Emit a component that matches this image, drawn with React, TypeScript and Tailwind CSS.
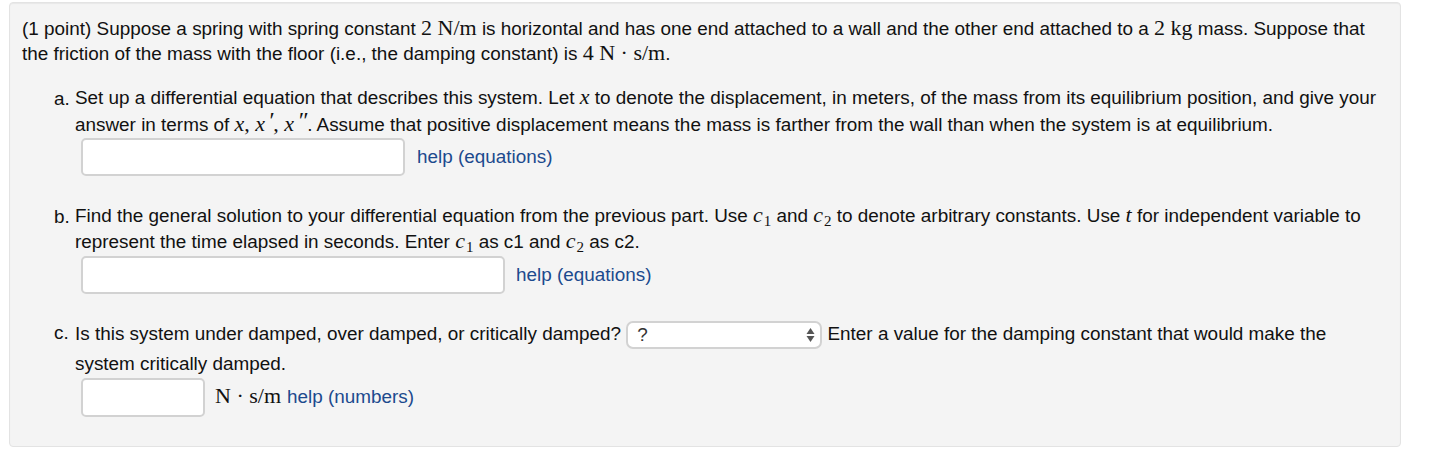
import React from "react";

const serif = "font-['Liberation_Serif','DejaVu_Serif',serif] text-[22px] leading-none";

function M({ children }: { children: React.ReactNode }) {
  return <span className={serif}>{children}</span>;
}

function V({ children }: { children: React.ReactNode }) {
  return <span className={`${serif} italic`}>{children}</span>;
}

function Prime({ mark }: { mark: string }) {
  return <span className={`${serif} italic text-[24px] relative -top-[3px] ml-[3px]`}>{mark}</span>;
}

function C({ n }: { n: string }) {
  return (
    <span className={serif}>
      <span className="italic">c</span>
      <span className="text-[15px] relative top-[4px] ml-[1px]">{n}</span>
    </span>
  );
}

function Help({ label }: { label: string }) {
  return <a className="text-[#1c4a8e] cursor-pointer">{label}</a>;
}

function Item({ marker, children }: { marker: string; children: React.ReactNode }) {
  return (
    <div className="flex ml-[32px]">
      <span className="w-[21px] shrink-0">{marker}</span>
      <div className="min-w-0 flex-1">{children}</div>
    </div>
  );
}

export default function App() {
  return (
    <div className="min-h-[468px] bg-white pt-[2px] pl-[9px] font-['Liberation_Sans',Arial,sans-serif] text-[18.9px] text-[#111]">
      <div className="w-[1392px] h-[445px] rounded bg-[#f4f4f4] border border-[#e3e3e3] shadow-[inset_0_1px_1px_rgba(0,0,0,0.05)] pt-[13px] pl-[12px] pr-[12px]">
        <p className="leading-[25px] whitespace-nowrap">
          (1 point) Suppose a spring with spring constant <M>2&nbsp;N/m</M> is horizontal and has one end attached to a
          wall and the other end attached to a <M>2&nbsp;kg</M> mass. Suppose that
          <br />
          the friction of the mass with the floor (i.e., the damping constant) is <M>4&nbsp;N&nbsp;·&nbsp;s/m</M>.
        </p>

        <div className="mt-[19px]">
          <Item marker="a.">
            <p className="leading-[26px] whitespace-nowrap">
              Set up a differential equation that describes this system. Let <V>x</V> to denote the displacement, in
              meters, of the mass from its equilibrium position, and give your
              <br />
              answer in terms of <V>x</V>
              <M>, </M>
              <V>x</V>
              <Prime mark="′" />
              <M>, </M>
              <V>x</V>
              <Prime mark="″" />. Assume that positive displacement means the mass is farther from the wall than when
              the system is at equilibrium.
            </p>
            <div className="flex items-center gap-[12px] ml-[6px]">
              <div className="w-[324px] h-[38px] bg-white border-2 border-[#d2d2d2] rounded-[5px]" />
              <Help label="help (equations)" />
            </div>
          </Item>
        </div>

        <div className="mt-[27px]">
          <Item marker="b.">
            <p className="leading-[26px] whitespace-nowrap">
              Find the general solution to your differential equation from the previous part. Use <C n="1" /> and{" "}
              <C n="2" /> to denote arbitrary constants. Use <V>t</V> for independent variable to
              <br />
              represent the time elapsed in seconds. Enter <C n="1" /> as c1 and <C n="2" /> as c2.
            </p>
            <div className="flex items-center gap-[11px] ml-[6px] mt-[1px]">
              <div className="w-[424px] h-[38px] bg-white border-2 border-[#d2d2d2] rounded-[5px]" />
              <Help label="help (equations)" />
            </div>
          </Item>
        </div>

        <div className="mt-[25px]">
          <Item marker="c.">
            <p className="leading-[29px] whitespace-nowrap">
              Is this system under damped, over damped, or critically damped?{" "}
              <span className="inline-flex items-center justify-between align-middle w-[196px] h-[28px] bg-white border-2 border-[#d2d2d2] rounded-[7px] pl-[9px] pr-[5px] text-[#333] leading-none">
                <span>?</span>
                <svg width="9" height="16" viewBox="0 0 9 16">
                  <path d="M4.5 1 L8.5 7 L0.5 7 Z" fill="#555" />
                  <path d="M4.5 15 L8.5 9 L0.5 9 Z" fill="#555" />
                </svg>
              </span>{" "}
              Enter a value for the damping constant that would make the
              <br />
              system critically damped.
            </p>
            <div className="flex items-center ml-[6px]">
              <div className="w-[124px] h-[39px] bg-white border-2 border-[#d2d2d2] rounded-[5px]" />
              <span className="ml-[10px] mr-[6px]">
                <M>N&nbsp;·&nbsp;s/m</M>
              </span>
              <Help label="help (numbers)" />
            </div>
          </Item>
        </div>
      </div>
    </div>
  );
}
